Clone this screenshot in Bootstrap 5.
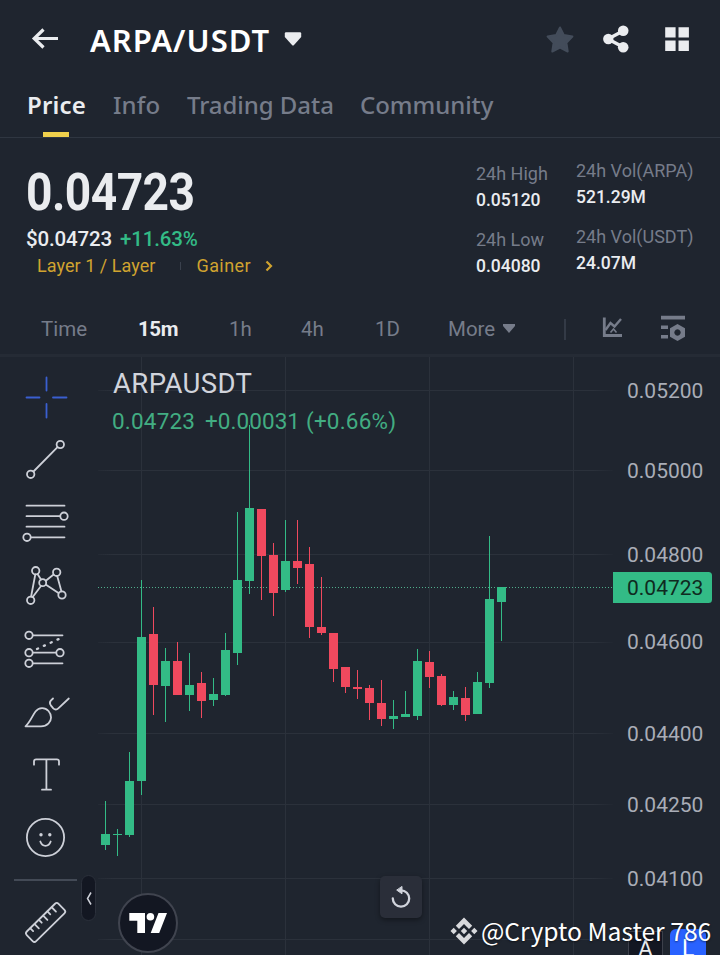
<!DOCTYPE html>
<html lang="en" data-bs-theme="dark">
<head>
<meta charset="utf-8">
<meta name="viewport" content="width=device-width, initial-scale=1">
<title>ARPA/USDT</title>
<link href="https://cdn.jsdelivr.net/npm/bootstrap@5.3.0/dist/css/bootstrap.min.css" rel="stylesheet">
<style>
  :root { --ink:#eaecef; --dim:#767c8a; --up:#33bb86; --down:#f0495e; --gold:#d0a32f; --bg:#1f252f; }
  body { background:var(--bg); color:var(--ink); font-family:Roboto,"Liberation Sans",sans-serif; overflow:hidden; }
  .screen { width:720px; height:955px; overflow:hidden; }
  svg { display:block; flex:none; }
  .topbar { height:77px; padding-left:31px; padding-right:30px; }
  .pair { font:600 31px/40px "Noto Sans",sans-serif; margin-left:32px; letter-spacing:1px; color:#fff; padding-top:2px; }
  .pair-caret { margin-left:14px; }
  .topbar .share { margin-left:29px; }
  .topbar .tiles { margin-left:35px; }
  .tabs { height:61px; padding:1px 0 0 27px; border-bottom:1px solid #2f3641; display:grid; grid-template-columns:86px 74px 173px 1fr; }
  .tabs a { font:500 24px/54px "Noto Sans",sans-serif; color:var(--dim); text-decoration:none; white-space:nowrap; position:relative; }
  .tabs a.active { color:var(--ink); font-weight:600; letter-spacing:.2px; }
  .tabs a + a { letter-spacing:.1px; }
  .tabs a:nth-child(n+3) { letter-spacing:-.05px; }
  .tabs a.active::after { content:""; position:absolute; left:16px; bottom:0; width:26px; height:5px; background:#f0d04c; }
  .stats { height:162px; }
  .quote { width:476px; padding:27px 0 0 26px; white-space:nowrap; }
  .last { font-size:51px; line-height:56px; font-weight:700; letter-spacing:-.6px; transform:scaleX(.905); transform-origin:0 50%; }
  .change { font-size:20.5px; line-height:26px; font-weight:500; margin-top:5px; letter-spacing:-.15px; }
  .change .up { color:var(--up); margin-left:8px; }
  .tags { font-size:18px; line-height:26px; color:var(--gold); padding:1px 0 0 11px; letter-spacing:.05px; }
  .tags i { width:1px; height:8px; background:#3a414d; margin:0 16px 0 24px; }
  .tags .gain { letter-spacing:.4px; }
  .tags svg { margin-left:14px; }
  .pairstat { font-size:18px; line-height:26px; white-space:nowrap; }
  .pairstat dt { font-weight:400; color:var(--dim); }
  .pairstat dd { margin:0 0 14px; font-weight:500; font-size:17.5px; }
  .c-low { width:100px; padding-top:23px; }
  .c-vol { padding-top:20px; }
  .frames { height:57px; padding:2px 0 0 41px; display:grid; grid-template-columns:97px 91px 72px 74px 73px 116px 37px 59px 1fr; align-items:center; font-size:20.5px; color:var(--dim); border-bottom:3px solid #252b35; white-space:nowrap; }
  .frames > * { position:relative; top:1px; }
  .frames b { color:var(--ink); font-weight:700; letter-spacing:-.4px; }
  .frames i { width:2px; height:21px; background:#333a46; }
  .frames svg { top:0; }
  .chartrow { height:598px; position:relative; }
  .tools { width:98px; padding:9px 0 0 14px; color:#cdd0d8; }
  .tools svg { fill:none; stroke:currentColor; stroke-width:1.8; stroke-linecap:round; stroke-linejoin:round; }
  .tools .cross { color:#3a5fd0; }
  .tools hr { width:63px; height:2px; margin:9px 0 0; background:#434a56; border:0; opacity:1; }
  .fold { position:absolute; left:81px; top:518px; width:15px; height:46px; border-radius:8px; background:#131722; border:1px solid #2b303b; }
  .tvmark { position:absolute; left:118px; top:536px; width:60px; height:60px; border-radius:50%; background:#131722; border:2px solid #40444f; }
  .reset { position:absolute; left:380px; top:519px; width:42px; height:42px; border-radius:5px; background:#2a2e39; box-shadow:0 2px 5px rgba(0,0,0,.4); }
  .scale { position:absolute; top:574px; height:40px; font-size:22px; line-height:34px; text-align:center; }
  .scale-a { left:628px; width:35px; background:#131722; border:1px solid #3c404b; }
  .scale-l { left:670px; width:36px; top:572px; background:#2962ff; border-radius:6px; font-size:23px; line-height:39px; color:#fff; text-align:left; padding-left:12px; }
  .handle { position:absolute; left:450px; top:554px; font:400 24.7px/36px "Noto Sans CJK SC",sans-serif; color:#fff; white-space:nowrap; text-shadow:0 1px 2px rgba(0,0,0,.5); gap:3px; height:40px; }
  .handle span { margin-top:-3px; }
  .ax { font-size:21px; fill:#a9adb7; }
</style>
</head>
<body>
<div class="screen">
  <header class="topbar d-flex align-items-center">
    <svg width="27" height="24" viewBox="31 27 27 24" fill="none" stroke="#eaecef" stroke-width="3.2"><path d="M58 38.500H34M43.500 29.500l-9.300 9 9.300 9"/></svg>
    <span class="pair">ARPA/USDT</span>
    <svg class="pair-caret" width="18" height="16" viewBox="285 31 18 16" fill="#eaecef"><path d="M287 32.300h14q1.200 0 1.200 1.200v3.500l-7.200 8q-1 1-2 0l-7.200-8v-3.500q0-1.200 1.200-1.200z"/></svg>
    <svg class="ms-auto" width="28" height="28" viewBox="545 25 28 28" fill="#434c5a" stroke="#434c5a" stroke-width="2" stroke-linejoin="round"><path d="M559 27.500l3.900 7.600 8.500 1.400-6 6.200 1.300 8.800-7.700-3.800-7.700 3.800 1.300-8.800-6-6.200 8.500-1.400z"/></svg>
    <svg class="share" width="26" height="28" viewBox="602 24.500 26 28" fill="#eaecef"><path d="M622 30.500l-15 8 15 8" fill="none" stroke="#eaecef" stroke-width="3.400"/><circle cx="607.300" cy="38.500" r="5.200"/><circle cx="622.200" cy="30.300" r="5.300"/><circle cx="622.200" cy="46.700" r="5.300"/></svg>
    <svg class="tiles" width="26" height="26" viewBox="663.500 25.500 26 26" fill="#eaecef"><path d="M664.700 26.700h10.400v10.400h-10.400zM678 26.700h10.400v10.400H678zM664.700 40h10.400v10.400h-10.400zM678 40h10.400v10.400H678z"/></svg>
  </header>

  <nav class="tabs">
    <a class="active" href="#">Price</a><a href="#">Info</a><a href="#">Trading Data</a><a href="#">Community</a>
  </nav>

  <section class="stats d-flex">
    <div class="quote">
      <div class="last">0.04723</div>
      <div class="change">$0.04723<span class="up">+11.63%</span></div>
      <div class="tags d-flex align-items-center"><span>Layer 1 / Layer</span><i></i><span class="gain">Gainer</span>
        <svg width="9" height="12" viewBox="0 0 9 12" fill="none" stroke="#d0a32f" stroke-width="2.200"><path d="M1.500 1.500L6 6l-4.500 4.500"/></svg></div>
    </div>
    <dl class="pairstat c-low mb-0"><dt>24h High</dt><dd>0.05120</dd><dt>24h Low</dt><dd>0.04080</dd></dl>
    <dl class="pairstat c-vol mb-0"><dt>24h Vol(ARPA)</dt><dd>521.29M</dd><dt>24h Vol(USDT)</dt><dd>24.07M</dd></dl>
  </section>

  <section class="frames">
    <span>Time</span><b>15m</b><span>1h</span><span>4h</span><span>1D</span>
    <span class="d-flex align-items-center">More<svg class="ms-2" width="12" height="10" viewBox="0 0 12 10" fill="#767c8a"><path d="M0 0h12v2L6 9 0 2z"/></svg></span>
    <i></i>
    <svg width="22" height="22" viewBox="601 317 22 22" fill="none" stroke="#767c8a" stroke-width="2.800"><path d="M604.300 317.500v18h17.700"/><path d="M605.500 330l5-7 4 3.500 6.500-7.500" stroke-width="2.400"/><path d="M610.500 332.500l3-3.500 3 3.500" stroke-width="1.600"/></svg>
    <svg width="26" height="28" viewBox="660 314 26 28" fill="#767c8a"><path d="M661 315.700h24v3.800h-24zM661 325.500h7v3.500h-7zM661 335h7v3.500h-7z"/><path fill-rule="evenodd" d="M677.500 324l7.500 4.300v8.400l-7.500 4.300-7.500-4.300v-8.400zM677.500 329.300a3.200 3.200 0 1 0 .01 0z"/></svg>
  </section>

  <section class="chartrow d-flex">
    <div class="tools d-flex flex-column">
      <svg class="cross" width="63" height="63" viewBox="14 366 63 63"><path d="M26.500 397.500h13M53 397.500h13.500M46.500 377.500v13M46.500 404v13.500"/></svg>
      <svg width="63" height="63" viewBox="14 429 63 63"><path d="M33.500 471.500l24-24.300"/><circle cx="60.300" cy="444.500" r="3.700"/><circle cx="30.700" cy="474.300" r="3.700"/></svg>
      <svg width="63" height="63" viewBox="14 492 63 63"><path d="M26.500 505.700h38M26.500 516.200H60M26.500 526.700h38M31 537.300h33.500"/><circle cx="64" cy="516.200" r="3.700"/><circle cx="27" cy="537.300" r="3.700"/></svg>
      <svg width="63" height="63" viewBox="14 555 63 63"><path d="M35.300 574.500l-4.200 22M37.500 574l3.500 5.500M45.800 580.700l7.500-6M57.200 576l4.200 15.300M46 584.700l12.500 8.300M41 586l-8.300 11"/><circle cx="35.700" cy="570.700" r="3.700"/><circle cx="56.700" cy="572.300" r="3.700"/><circle cx="42.700" cy="582.700" r="3.500"/><circle cx="30.700" cy="600.300" r="3.700"/><circle cx="62" cy="595" r="3.700"/></svg>
      <svg width="63" height="63" viewBox="14 618 63 63"><path d="M33 635.300h29.500M33 652.700h23M33 663.300h29.500"/><path d="M37 649l24-11" stroke-width="2.300" stroke-dasharray="1.200 6.300"/><circle cx="29" cy="635.300" r="3.700"/><circle cx="29" cy="652.700" r="3.700"/><circle cx="29" cy="663.300" r="3.700"/><circle cx="60" cy="652.700" r="3.700"/></svg>
      <svg width="63" height="63" viewBox="14 681 63 63"><path d="M25.500 726.300c5-4.500 7-11 10-14.800 3.500-4.500 9.500-4.500 13-.5s3.300 9 0 12.300c-2.500 2.500-5 3-7.500 3z"/><path d="M53 698.500l-2.200 2.200c-1.300 1.500-1.200 3 0 4.600l2.500 3c1.500 1.600 3.500 1.600 5 0l10.500-9.800"/></svg>
      <svg width="63" height="63" viewBox="14 744 63 63"><path d="M34 764.700v-3.200q0-2.200 2.200-2.200h20.600q2.200 0 2.200 2.200v3.200M46.400 759.500v30M42 789.700h9"/></svg>
      <svg width="63" height="63" viewBox="14 807 63 63"><circle cx="45.500" cy="837.500" r="18.600"/><path d="M40.300 841.500c2 5.700 8.400 5.700 10.400 0"/><g fill="currentColor" stroke="none"><circle cx="41" cy="834.800" r="1.700"/><circle cx="49.800" cy="834.800" r="1.700"/></g></svg>
      <hr>
      <svg width="63" height="74" viewBox="14 881 63 74"><g transform="translate(45.600 922.400) rotate(-44.500)"><rect x="-22.300" y="-6.700" width="44.600" height="13.400" rx="2.500"/><path d="M-15-6.500v4M-9-6.500v6M-3-6.500v4M3-6.500v6M9-6.500v4M15-6.500v6"/></g></svg>
    </div>

    <svg width="622" height="598" viewBox="98 357 622 598" font-family="Roboto, sans-serif">
      <defs><linearGradient id="fade" gradientUnits="userSpaceOnUse" x1="98" x2="613" y1="0" y2="0"><stop offset="0" stop-color="#2b313b" stop-opacity=".4"/><stop offset=".03" stop-color="#2b313b"/><stop offset=".96" stop-color="#2b313b"/><stop offset="1" stop-color="#2b313b" stop-opacity=".2"/></linearGradient></defs>
      <path fill="#2b313b" d="M141 357h1v598h-1zM285 357h1v598h-1zM429 357h1v598h-1zM573 357h1v598h-1z"/>
      <path fill="url(#fade)" d="M98 390h515v1H98zM98 470h515v1H98zM98 554h515v1H98zM98 642h515v1H98zM98 733h515v1H98zM98 804h515v1H98zM98 878h515v1H98zM98 939h515v1H98z"/>
      <path d="M98 587.500h515" stroke="#4fae8b" stroke-dasharray="1 2"/>
      <g id="candles"></g>
      <text x="113" y="393" font-size="27.500" fill="#d1d4dc" textLength="139">ARPAUSDT</text>
      <g font-size="22.500" fill="#42ad82"><text x="112" y="429" textLength="83">0.04723</text><text x="205" y="429" textLength="95">+0.00031</text><text x="306" y="429" textLength="90">(+0.66%)</text></g>
      <g class="ax"><text x="627" y="398">0.05200</text><text x="627" y="478">0.05000</text><text x="627" y="562">0.04800</text><text x="627" y="649">0.04600</text><text x="627" y="741">0.04400</text><text x="627" y="812">0.04250</text><text x="627" y="886">0.04100</text></g>
      <path d="M613 572h95.500q3.500 0 3.500 3.500v24q0 3.500-3.500 3.500H613z" fill="#33bb86"/>
      <text x="627" y="595" font-size="21" fill="#0f2a20">0.04723</text>
    </svg>

    <div class="fold d-flex align-items-center justify-content-center"><svg width="6" height="13" viewBox="0 0 6 13" fill="none" stroke="#cdd0d8" stroke-width="1.500"><path d="M5 .5L1.500 6.500 5 12.500"/></svg></div>
    <div class="tvmark d-flex align-items-center justify-content-center"><svg width="40" height="22" viewBox="128 913 40 22" fill="#fff"><path d="M129.300 914H145v20h-7.700v-12.300h-8zM158.500 914h8.500l-7.800 20h-8.500z"/><circle cx="150.400" cy="917.800" r="3.800"/></svg></div>
    <button class="reset btn p-0 border-0 d-flex align-items-center justify-content-center" aria-label="Reset"><svg width="22" height="24" viewBox="390 885 22 24" fill="none" stroke="#d1d4dc" stroke-width="2.300" stroke-linecap="round"><path d="M392.800 898.500a8.200 8.200 0 1 0 8.200-8.200"/><path d="M402 886.800v7l-5-3.500z" fill="#d1d4dc" stroke-width="1"/></svg></button>
    <div class="scale scale-a">A</div><div class="scale scale-l">L</div>
    <div class="handle d-flex align-items-center">
      <svg width="28" height="28" viewBox="0 0 28 28" fill="#d8d9dc"><path d="M14 .5l8.200 8.200-3.200 3.200-5-5-5 5-3.200-3.200zM14 27.500l8.200-8.200-3.200-3.200-5 5-5-5-3.200 3.200zM14 10.800l3.200 3.200-3.200 3.200-3.200-3.200zM3.700 10.800L6.900 14l-3.200 3.200L.5 14zM24.300 10.800l3.200 3.200-3.200 3.200-3.200-3.200z"/></svg>
      <span>@Crypto Master 786</span>
    </div>
  </section>
</div>
<script src="https://cdn.jsdelivr.net/npm/bootstrap@5.3.0/dist/js/bootstrap.bundle.min.js"></script>
<script>
  // direction, then high, body top, body bottom and low on the chart's y scale
  const bars = [
    [1,801,834,845,850],[1,829,834,835,856],[1,752,781,835,837],[1,580,637,781,795],[0,607,634,685,715],
    [1,648,661,686,722],[0,642,661,695,695],[1,653,685,695,711],[0,672,683,701,718],[1,678,694,700,706],
    [1,633,650,695,696],[1,512,580,653,665],[1,425,508,581,594],[0,509,509,556,600],[0,543,555,593,616],
    [1,520,561,590,592],[0,520,561,568,584],[0,547,564,627,638],[0,577,627,633,635],[0,633,633,669,682],
    [0,667,667,687,693],[0,670,687,689,699],[0,685,688,703,720],[0,680,703,719,726],[1,700,716,719,729],
    [1,691,714,717,717],[1,649,661,716,720],[0,651,662,677,688],[0,674,676,705,706],[1,691,697,705,710],
    [0,687,698,715,721],[1,672,682,714,714],[1,536,599,683,688],[1,587,587,602,641]
  ];
  document.getElementById('candles').innerHTML = bars.map(([up, hi, top, bot, lo], i) => {
    const x = 101 + 12 * i, c = up ? '#33bb86' : '#f0495e';
    return `<rect x="${x + 4}" y="${hi}" width="1" height="${lo - hi}" fill="${c}"/><rect x="${x}" y="${top}" width="9" height="${bot - top}" fill="${c}"/>`;
  }).join('');
</script>
</body>
</html>
